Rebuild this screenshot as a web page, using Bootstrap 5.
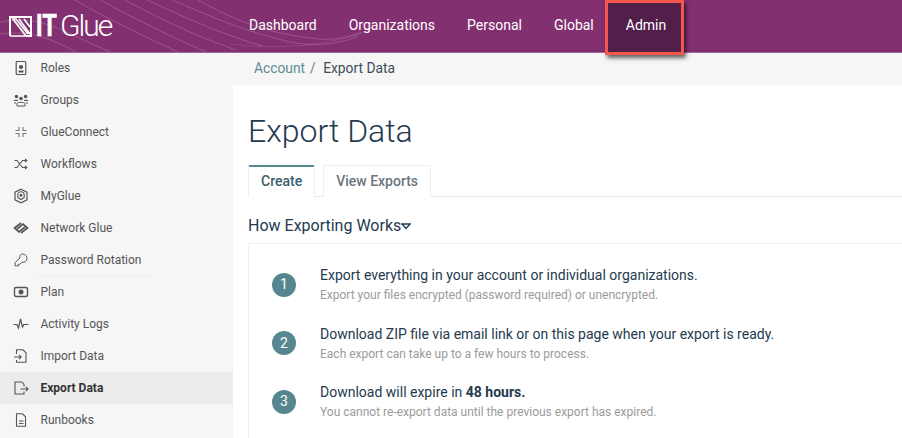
<!DOCTYPE html>
<html lang="en">
<head>
    <meta charset="UTF-8">
    <meta name="viewport" content="width=device-width, initial-scale=1.0">
    <title>Export Data - IT Glue</title>
    <link href="https://cdn.jsdelivr.net/npm/bootstrap@5.3.0/dist/css/bootstrap.min.css" rel="stylesheet">
    <style>
        html, body { height: 100%; overflow: hidden; }
        body { font-family: Roboto, "Liberation Sans", sans-serif; background: #f6f6f6; color: #1f3347; }
        .top-bar { height: 53px; background: #82306f; border-bottom: 1px solid #a0659a; position: relative; }
        .top-waves { position: absolute; left: 0; top: 0; width: 560px; height: 52px; }
        .logo-box { width: 233px; padding-left: 9px; height: 52px; position: relative; color: #fff; line-height: 26px; }
        .logo-it { font-family: "Liberation Sans", sans-serif; font-weight: 700; font-size: 31px; display: inline-block; width: 20px; margin-left: 4px; transform: scaleX(.75); transform-origin: left center; -webkit-text-stroke: .6px #fff; }
        .logo-glue { font-weight: 300; font-size: 30px; margin-left: 4px; letter-spacing: -2px; }
        .top-link { color: #fff; font-size: 14px; line-height: 50px; padding: 0 16px; display: block; text-decoration: none; position: relative; }
        .top-link.is-open { background: #521f4b; padding: 0 16px 0 18px; margin-left: -2px; height: 52px; }
        .red-box { position: absolute; left: 605px; top: 0; width: 79px; height: 55px; border: 3px solid #f5574b; box-shadow: 2px 3px 4px rgba(0,0,0,.6); pointer-events: none; }
        .side-col { width: 233px; flex: none; margin-top: -1px; }
        .side-link { height: 32px; display: flex; align-items: center; color: #555; font-size: 12px; text-decoration: none; }
        .side-link svg { width: 16px; height: 16px; margin-left: 13px; margin-right: 11.5px; flex: none; }
        .side-link.is-active { background: #ececec; color: #333; font-weight: 700; }
        .side-sep { border-top: 1px solid #eee; margin: 0 82px -1px 36px; height: 0; }
        .crumb-row { height: 32px; padding-left: 21px; font-size: 13.8px; line-height: 31px; color: #3f4d59; }
        .crumb-row a { color: #5d8b93; text-decoration: none; }
        .crumb-row .crumb-div { color: #777; margin: 0 4px 0 5px; }
        .content-pane { background: #fff; height: 353px; padding: 0 0 0 15px; overflow: hidden; }
        .page-title { font-size: 32px; font-weight: 300; line-height: 38px; margin: 27px 0 15px 0; color: #243a4e; }
        .tab-row { border-bottom: 1px solid #e9e9e9; height: 32px; display: flex; gap: 8px; }
        .tab-item { height: 32px; border: 1px solid #eee; border-bottom: 0; padding: 0 12px; font-size: 14px; font-weight: 500; line-height: 30px; color: #6c757d; background: #fff; border-radius: 2px 2px 0 0; }
        .tab-item.is-on { color: #37616b; border-top: 2px solid #5a8a92; border-bottom: 1px solid #fff; height: 33px; line-height: 28px; }
        .how-head { font-size: 16px; line-height: 20px; margin: 19px 0 7px 0; color: #243a4e; display: flex; align-items: center; }
        .how-box { border: 1px solid #f1f1f1; border-right: 0; height: 200px; padding: 21px 0 0 23px; }
        .step-row { display: flex; align-items: center; height: 39px; margin-bottom: 19.5px; }
        .step-num { width: 24px; height: 24px; flex: none; border-radius: 50%; background: #568790; color: #fff; font-size: 14px; display: flex; align-items: center; justify-content: center; margin-right: 24px; }
        .step-main { font-size: 14px; line-height: 21px; color: #243a4e; }
        .step-main b { font-weight: 700; }
        .step-sub { font-size: 12px; line-height: 18px; color: #9b9b9b; }
    </style>
</head>
<body>
    <div class="top-bar d-flex">
        <svg class="top-waves" viewBox="0 0 560 52" fill="none" stroke="#b77aa9" stroke-opacity=".5">
            <path d="M0 22C40 14 60 30 110 52"/>
            <path d="M0 34C30 30 50 38 76 52"/>
            <path d="M75 0C105 18 140 34 178 52"/>
            <path d="M100 0C130 16 165 34 206 52"/>
            <path d="M125 0C155 16 190 34 236 50"/>
            <path d="M147 0C178 14 215 32 262 46"/>
            <path d="M172 0C205 14 240 30 290 42C320 48 345 42 358 36"/>
            <path d="M198 0C230 18 262 32 310 38C335 42 350 36 362 32"/>
            <path d="M230 44C280 50 330 46 370 30" stroke-opacity=".3"/>
        </svg>
        <div class="logo-box d-flex align-items-center">
            <svg width="23" height="21" viewBox="0 0 23 21" fill="none" stroke="#fff" stroke-width="2">
                <path d="M1 20V1H22V20H17"/>
                <path d="M1 20H17L4 3H7L19 18M10 3L21 18M15 3L21 11" stroke-width="1.700"/>
            </svg>
            <span class="logo-it">IT</span><span class="logo-glue">Glue</span>
        </div>
        <nav class="d-flex position-relative">
            <a class="top-link" href="#">Dashboard</a>
            <a class="top-link" href="#">Organizations</a>
            <a class="top-link" href="#">Personal</a>
            <a class="top-link" href="#">Global</a>
            <a class="top-link is-open" href="#">Admin</a>
        </nav>
        <div class="red-box"></div>
    </div>
    <div class="d-flex">
        <div class="side-col">
            <a class="side-link" href="#"><svg viewBox="0 0 16 16" fill="none" stroke="#555" stroke-width="1.200"><rect x="3.200" y="1.500" width="9.600" height="13" rx="1"/><circle cx="8" cy="7" r="1.500" fill="#555"/><path d="M5.500 11.500h5" stroke-width="2"/></svg>Roles</a>
            <a class="side-link" href="#"><svg viewBox="0 0 16 16" fill="#555" stroke="none"><circle cx="3.400" cy="4.500" r="1.700"/><circle cx="12.600" cy="4.500" r="1.700"/><circle cx="8" cy="6.500" r="1.800"/><path d="M0.500 9c.5-1.600 4.500-1.600 5 0zM10.500 9c.5-1.600 4.500-1.600 5 0z"/><path d="M4 14v-2.500c0-1.500 8-1.500 8 0V14zM1 11h2M13 11h2" fill="none" stroke="#555"/></svg>Groups</a>
            <a class="side-link" href="#"><svg viewBox="0 0 16 16" fill="none" stroke="#777" stroke-width="1.100"><path d="M6 3v3.500H2.500M10 3v3.500h3.500M6 13V9.500H2.500M10 13V9.500h3.500"/></svg>GlueConnect</a>
            <a class="side-link" href="#"><svg viewBox="0 0 16 16" fill="none" stroke="#555" stroke-width="1.100"><path d="M1.500 4.500h2.500l5.500 7h4M1.500 11.500h2.500l5.500-7h4M12 3l1.800 1.500L12 6M12 10l1.800 1.500L12 13"/></svg>Workflows</a>
            <a class="side-link" href="#"><svg viewBox="0 0 16 16" fill="none" stroke="#555" stroke-width="1.200"><path d="M8 1.200l6 3v7.600l-6 3-6-3V4.200z"/><path d="M4.800 9.500V7a3.200 3.200 0 016.400 0v2.500L8 11.500z" stroke-width="1.100"/><circle cx="8" cy="7.300" r=".9" fill="#555"/></svg>MyGlue</a>
            <a class="side-link" href="#"><svg viewBox="0 0 16 16" fill="none" stroke="#555" stroke-width="1.700"><path d="M8 3L1.500 8 6 12l6-5"/><path d="M8 13l6.500-5L10 4 4 9"/></svg>Network Glue</a>
            <a class="side-link" href="#"><svg viewBox="0 0 16 16" fill="none" stroke="#555" stroke-width="1"><path d="M9.500 2a4.500 4.500 0 014.500 4.500c0 2.500-2.500 4.300-5 3.800L7 12.300H5.500v1.500H2v-3l4.800-4.800C6.500 4 7.500 2 9.500 2z"/></svg>Password Rotation</a>
            <div class="side-sep"></div>
            <a class="side-link" href="#"><svg viewBox="0 0 16 16" fill="none" stroke="#555" stroke-width="1.400"><rect x="1.500" y="3.500" width="13" height="9" rx="1.500"/><circle cx="8" cy="8" r="1.800" fill="#555"/></svg>Plan</a>
            <a class="side-link" href="#"><svg viewBox="0 0 16 16" fill="none" stroke="#555" stroke-width="1.200"><path d="M0.500 8.500h3.500l1.500 3.500 2-9 2 8 1.300-2.500h4.500"/></svg>Activity Logs</a>
            <a class="side-link" href="#"><svg viewBox="0 0 16 16" fill="none" stroke="#555" stroke-width="1.100"><path d="M3.500 6V1.800H10l3 3v9.400H3.500V12"/><path d="M1 9h7M6 6.800L8.200 9 6 11.200"/></svg>Import Data</a>
            <a class="side-link is-active" href="#"><svg viewBox="0 0 16 16" fill="none" stroke="#555" stroke-width="1.100"><path d="M11 6.500V4.500L8.800 2H2v12h9v-2.500"/><path d="M7.500 9h7.500M13 7l2 2-2 2"/></svg>Export Data</a>
            <a class="side-link" href="#"><svg viewBox="0 0 16 16" fill="none" stroke="#555" stroke-width="1.100"><path d="M3.500 1.800H9.500l3 3v9.400h-9z"/><path d="M6 9h4.500M6 11.500h4.500" stroke-width="1.200"/></svg>Runbooks</a>
        </div>
        <div class="flex-grow-1">
            <div class="crumb-row"><a href="#">Account</a><span class="crumb-div">/</span> Export Data</div>
            <div class="content-pane">
                <h1 class="page-title">Export Data</h1>
                <div class="tab-row">
                    <div class="tab-item is-on">Create</div>
                    <div class="tab-item">View Exports</div>
                </div>
                <div class="how-head">How Exporting Works<svg width="10" height="7" viewBox="0 0 10 7" fill="none" stroke="#243a4e" stroke-width="1.400"><path d="M1 1h8L5 5.500z"/></svg></div>
                <div class="how-box">
                    <div class="step-row">
                        <div class="step-num">1</div>
                        <div><div class="step-main">Export everything in your account or individual organizations.</div><div class="step-sub">Export your files encrypted (password required) or unencrypted.</div></div>
                    </div>
                    <div class="step-row">
                        <div class="step-num">2</div>
                        <div><div class="step-main">Download ZIP file via email link or on this page when your export is ready.</div><div class="step-sub">Each export can take up to a few hours to process.</div></div>
                    </div>
                    <div class="step-row">
                        <div class="step-num">3</div>
                        <div><div class="step-main">Download will expire in <b>48 hours.</b></div><div class="step-sub">You cannot re-export data until the previous export has expired.</div></div>
                    </div>
                </div>
            </div>
        </div>
    </div>
    <script src="https://cdn.jsdelivr.net/npm/bootstrap@5.3.0/dist/js/bootstrap.bundle.min.js"></script>
</body>
</html>
